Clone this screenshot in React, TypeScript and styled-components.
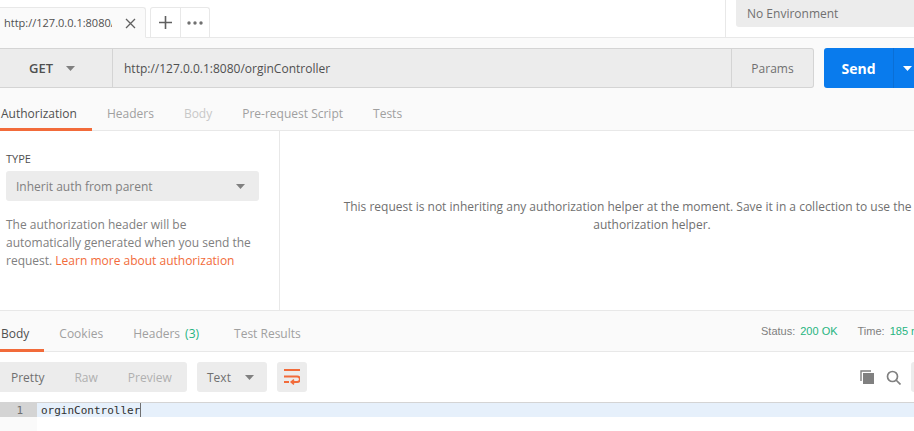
import React from "react";
import styled, { createGlobalStyle } from "styled-components";

const Global = createGlobalStyle`
  html, body { margin: 0; padding: 0; background: #fff; overflow: hidden; }
  body { font-family: "Open Sans", sans-serif; font-size: 12px; color: #505050; }
`;
const Page = styled.div`
  width: 914px; height: 431px; overflow: hidden; display: flex; flex-direction: column;
`;
const TabStrip = styled.div`
  height: 38px; flex: none; box-sizing: border-box; display: flex; align-items: flex-end;
  border-bottom: 1px solid #e8e8e8; background: #fff;
`;
const ReqTab = styled.div`
  width: 146px; height: 31px; margin-bottom: -1px; box-sizing: border-box; flex: none;
  display: flex; align-items: center; padding: 1px 0 0 4px; gap: 13px;
  background: #fafafa; border: 1px solid #e8e8e8; border-left: none; border-bottom-color: #fafafa;
  border-radius: 0 3px 0 0;
`;
const TabTitle = styled.span`
  width: 108px; overflow: hidden; white-space: nowrap; font-size: 11px; color: #505050; line-height: 14px; flex: none;
`;
const TabActions = styled.div`
  margin-left: 4px; width: 60px; height: 30px; box-sizing: border-box; display: flex; flex: none;
  border: 1px solid #e8e8e8; border-bottom: none; border-radius: 3px 3px 0 0;
`;
const TabAction = styled.div<{ $wide?: boolean }>`
  width: ${(p) => (p.$wide ? 30 : 28)}px; display: flex; align-items: center; justify-content: center;
  & + & { border-left: 1px solid #e8e8e8; }
`;
const EnvArea = styled.div`
  margin-left: auto; width: 189px; height: 37px; box-sizing: border-box; align-self: flex-start; flex: none;
  border-left: 1px solid #e8e8e8; padding-left: 10px;
`;
const EnvSelect = styled.div`
  height: 27px; box-sizing: border-box; background: #ececec; border-radius: 0 0 0 3px;
  padding: 4px 0 0 11px; font-size: 12px; line-height: 20px; color: #707070;
`;
const RequestBar = styled.div`
  height: 50px; flex: none; box-sizing: border-box; padding-top: 10px; display: flex; background: #fafafa;
`;
const UrlGroup = styled.div`
  width: 814px; height: 40px; box-sizing: border-box; display: flex; flex: none;
  background: #ececec; border: 1px solid #d4d4d4; border-left: none; border-radius: 0 3px 3px 0;
`;
const Method = styled.div`
  width: 113px; box-sizing: border-box; flex: none; display: flex; align-items: center; padding-left: 29px; gap: 13px;
  font-size: 13px; font-weight: 600; color: #505050; border-right: 1px solid #d4d4d4;
`;
const UrlText = styled.div`
  flex: 1; display: flex; align-items: center; padding-left: 11px; font-size: 12px; color: #505050;
`;
const Params = styled.div`
  width: 81px; flex: none; display: flex; align-items: center; justify-content: center; font-size: 12px; color: #707070;
  border-left: 1px solid #d4d4d4;
`;
const SendGroup = styled.div`
  margin-left: 10px; width: 90px; height: 40px; flex: none; display: flex; background: #097bed;
  border-radius: 3px 0 0 3px; color: #fff;
`;
const SendLabel = styled.div`
  width: 69px; flex: none; display: flex; align-items: center; justify-content: center;
  font-size: 14px; font-weight: 700; border-right: 1px solid #0a6fd6;
`;
const SendMore = styled.div`
  flex: 1; display: flex; align-items: center; padding-left: 9px;
`;
const Tabs = styled.div<{ $h: number; $top?: boolean }>`
  height: ${(p) => p.$h}px; flex: none; box-sizing: border-box; display: flex; align-items: stretch;
  background: #fafafa; border-bottom: 1px solid #e8e8e8;
  ${(p) => (p.$top ? "border-top: 1px solid #e8e8e8;" : "")}
`;
const TabItem = styled.div<{ $active?: boolean; $dim?: boolean; $pt: number; $first?: boolean; $ml?: number }>`
  flex: none; box-sizing: border-box; display: flex; align-items: center;
  white-space: nowrap; font-size: 12px; margin: 0 0 -1px ${(p) => p.$ml ?? 0}px;
  padding: ${(p) => p.$pt}px 15px 0 ${(p) => (p.$first ? 1 : 15)}px;
  color: ${(p) => (p.$active ? "#505050" : p.$dim ? "#c8c8c8" : "#a0a0a0")};
  border-bottom: 3px solid ${(p) => (p.$active ? "#f26b3a" : "transparent")};
`;
const Count = styled.span`
  color: #26b47f; margin-left: 5px;
`;
const AuthPane = styled.div`
  height: 179px; flex: none; display: flex; background: #fff;
`;
const AuthLeft = styled.div`
  width: 280px; flex: none; box-sizing: border-box; border-right: 1px solid #e8e8e8; padding: 21px 20px 0 6px;
`;
const TypeLabel = styled.div`
  font-size: 11px; line-height: 14px; color: #505050;
`;
const AuthSelect = styled.div`
  margin-top: 5px; height: 30px; width: 253px; box-sizing: border-box; background: #ececec; border-radius: 3px;
  display: flex; align-items: center; justify-content: space-between; padding: 0 14px 0 10px; font-size: 12px; color: #808080;
`;
const Helper = styled.div`
  margin-top: 15px; font-size: 12px; line-height: 18px; color: #808080; width: 252px;
`;
const LearnMore = styled.span`
  color: #f26b3a;
`;
const AuthMessage = styled.div`
  width: 640px; flex: none; margin-left: 52px; padding-top: 67px; box-sizing: border-box; text-align: center;
  font-size: 12px; line-height: 18px; color: #707070;
`;
const StatusBlock = styled.div`
  margin-left: auto; display: flex; align-items: center; font-family: "Liberation Sans", Arial, sans-serif; font-size: 11px;
  color: #808080; width: 153px; flex: none; box-sizing: border-box; white-space: nowrap; overflow: hidden;
`;
const StatusValue = styled.span`
  color: #26b47f; margin-left: 5px; margin-right: 20px;
`;
const Toolbar = styled.div`
  height: 51px; flex: none; box-sizing: border-box; display: flex; align-items: center; background: #fff;
  border-bottom: 1px solid #d4d4d4;
`;
const FormatGroup = styled.div`
  width: 187px; height: 30px; flex: none; box-sizing: border-box; display: flex; align-items: center; gap: 30px; padding: 1px 0 0 11px;
  background: #ececec; border-radius: 0 3px 3px 0; font-size: 12px;
`;
const FormatItem = styled.div<{ $active?: boolean }>`
  flex: none; color: ${(p) => (p.$active ? "#707070" : "#b0b0b0")};
`;
const TextSelect = styled.div`
  margin-left: 10px; width: 70px; height: 30px; flex: none; box-sizing: border-box; display: flex; align-items: center; gap: 14px; padding: 1px 0 0 10px;
  background: #ececec; border-radius: 3px; font-size: 12px; color: #707070;
`;
const WrapButton = styled.div`
  margin-left: 10px; width: 30px; height: 30px; flex: none; display: flex; align-items: center; justify-content: center;
  background: #ececec; border-radius: 3px;
`;
const ToolIcons = styled.div`
  margin-left: auto; display: flex; align-items: center; gap: 11px; flex: none;
`;
const GhostEdge = styled.div`
  width: 3px; height: 30px; background: #ececec; border-radius: 3px 0 0 3px; margin-left: -1px;
`;
const CodeArea = styled.div`
  display: flex; flex-direction: column; flex: 1; background: #fff;
`;
const CodeLine = styled.div`
  height: 14px; display: flex; background: #e6f0fb;
`;
const Gutter = styled.div`
  width: 37px; flex: none; box-sizing: border-box; background: #d4d4d4; text-align: right; padding: 1px 14px 0 0;
  font-family: "DejaVu Sans Mono", monospace; font-size: 11px; line-height: 14px; color: #707070;
`;
const Code = styled.div`
  padding-left: 4px; font-family: "DejaVu Sans Mono", monospace; font-size: 11px; line-height: 15px; color: #303030;
`;
const Caret = styled.span`
  display: inline-block; width: 1px; height: 14px; vertical-align: top; background: #707070;
`;
const GutterRest = styled.div`
  width: 37px; height: 14px; background: #fafafa;
`;

const Tri = ({ c = "#808080" }: { c?: string }) => (
  <svg width={9} height={5} viewBox="0 0 9 5" style={{ flex: "none" }}>
    <path d="M0 0h9L4.5 5z" fill={c} />
  </svg>
);

export default function App() {
  return (
    <Page>
      <Global />
      <TabStrip>
        <ReqTab>
          <TabTitle>http://127.0.0.1:8080/</TabTitle>
          <svg width="11" height="11" viewBox="0 0 11 11"><path d="M1 1l9 9M10 1l-9 9" stroke="#606060" strokeWidth="1.3" /></svg>
        </ReqTab>
        <TabActions>
          <TabAction $wide>
            <svg width="13" height="13" viewBox="0 0 13 13"><path d="M6.5 0v13M0 6.5h13" stroke="#606060" strokeWidth="1.6" /></svg>
          </TabAction>
          <TabAction>
            <svg width="16" height="4" viewBox="0 0 16 4"><circle cx="2" cy="2" r="1.7" fill="#707070" /><circle cx="8" cy="2" r="1.7" fill="#707070" /><circle cx="14" cy="2" r="1.7" fill="#707070" /></svg>
          </TabAction>
        </TabActions>
        <EnvArea><EnvSelect>No Environment</EnvSelect></EnvArea>
      </TabStrip>
      <RequestBar>
        <UrlGroup>
          <Method>GET <Tri /></Method>
          <UrlText>http://127.0.0.1:8080/orginController</UrlText>
          <Params>Params</Params>
        </UrlGroup>
        <SendGroup>
          <SendLabel>Send</SendLabel>
          <SendMore><Tri c="#fff" /></SendMore>
        </SendGroup>
      </RequestBar>
      <Tabs $h={43}>
        <TabItem $active $first $pt={11}>Authorization</TabItem>
        <TabItem $pt={11}>Headers</TabItem>
        <TabItem $dim $pt={11}>Body</TabItem>
        <TabItem $pt={11}>Pre-request Script</TabItem>
        <TabItem $pt={11}>Tests</TabItem>
      </Tabs>
      <AuthPane>
        <AuthLeft>
          <TypeLabel>TYPE</TypeLabel>
          <AuthSelect>Inherit auth from parent <Tri /></AuthSelect>
          <Helper>The authorization header will be automatically generated when you send the request. <LearnMore>Learn more about authorization</LearnMore></Helper>
        </AuthLeft>
        <AuthMessage>This request is not inheriting any authorization helper at the moment. Save it in a collection to use the parent's authorization helper.</AuthMessage>
      </AuthPane>
      <Tabs $h={42} $top>
        <TabItem $active $first $pt={7}>Body</TabItem>
        <TabItem $pt={7}>Cookies</TabItem>
        <TabItem $pt={7}>Headers<Count>(3)</Count></TabItem>
        <TabItem $pt={7} $ml={5}>Test Results</TabItem>
        <StatusBlock>
          Status:<StatusValue>200 OK</StatusValue>Time:<StatusValue>185 ms</StatusValue>
        </StatusBlock>
      </Tabs>
      <Toolbar>
        <FormatGroup>
          <FormatItem $active>Pretty</FormatItem>
          <FormatItem>Raw</FormatItem>
          <FormatItem>Preview</FormatItem>
        </FormatGroup>
        <TextSelect>Text <Tri /></TextSelect>
        <WrapButton>
          <svg width="16" height="16" viewBox="0 0 16 16" fill="none" stroke="#f26b3a" strokeWidth="2">
            <path d="M0 1h16M0 7.5h13.2a2.7 2.7 0 0 1 0 5.5H8" />
            <path d="M0 13h5" />
            <path d="M10 10.6L7.2 13l2.8 2.4" strokeWidth="1.6" />
          </svg>
        </WrapButton>
        <ToolIcons>
          <svg width="15" height="15" viewBox="0 0 15 15">
            <path d="M1 11V1h10" fill="none" stroke="#808080" strokeWidth="1.4" />
            <rect x="3" y="3" width="11" height="11" fill="#808080" />
          </svg>
          <svg width="15" height="15" viewBox="0 0 15 15" fill="none" stroke="#808080" strokeWidth="1.7">
            <circle cx="6.5" cy="6.5" r="5" />
            <path d="M10 10l4.5 4.5" />
          </svg>
          <GhostEdge />
        </ToolIcons>
      </Toolbar>
      <CodeArea>
        <CodeLine>
          <Gutter>1</Gutter>
          <Code>orginController<Caret /></Code>
        </CodeLine>
        <GutterRest />
      </CodeArea>
    </Page>
  );
}
